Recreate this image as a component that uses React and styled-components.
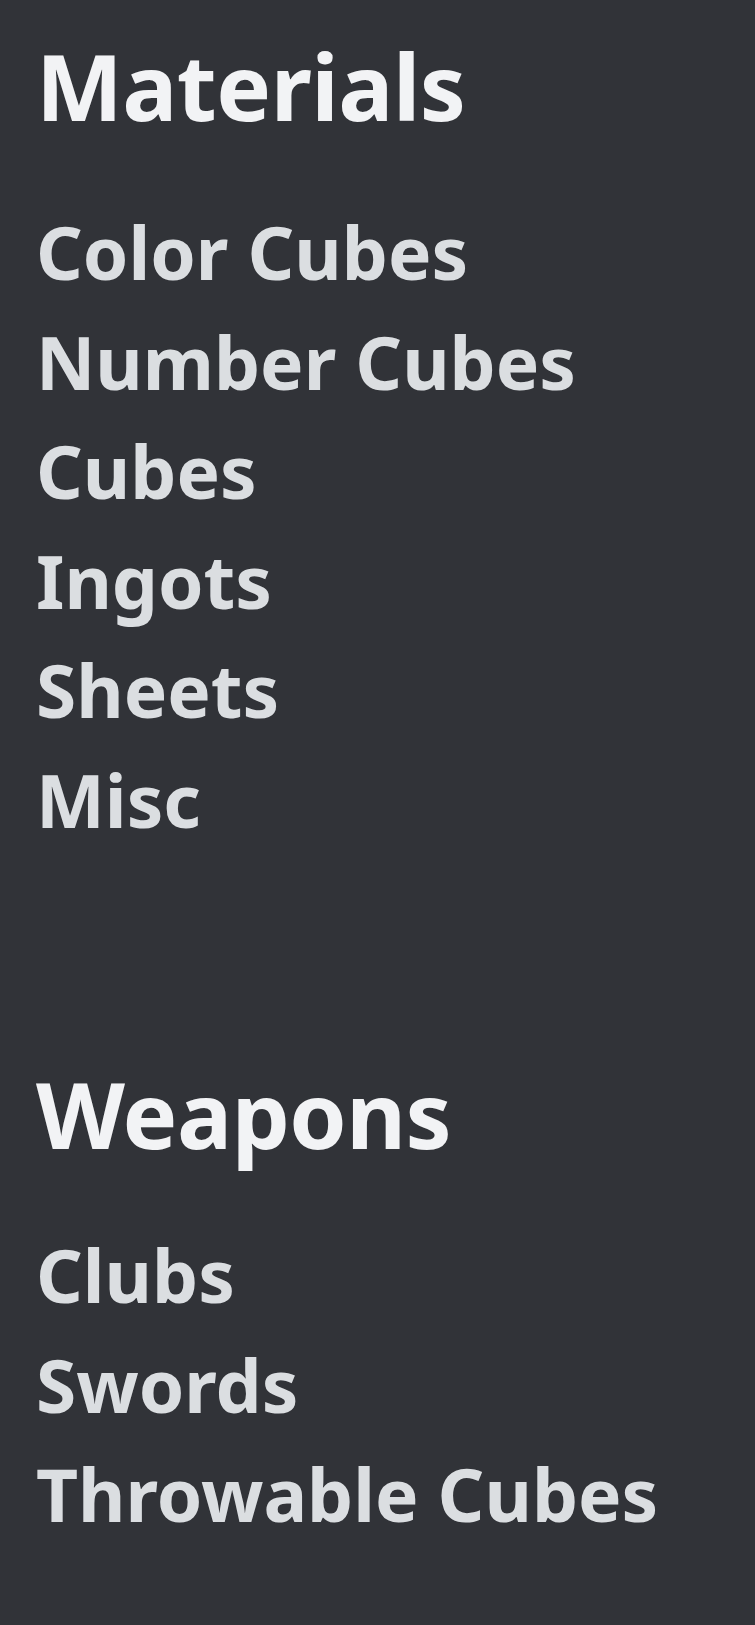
import React from "react";
import styled, { createGlobalStyle } from "styled-components";

const GlobalStyle = createGlobalStyle`
  html, body {
    margin: 0;
    padding: 0;
    background: #313338;
  }
  body {
    font-family: "Noto Sans", "Liberation Sans", sans-serif;
  }
`;

const Page = styled.main`
  min-height: 1625px;
  box-sizing: border-box;
  background: #313338;
  padding: 31px 36px 0 36px;
  display: flex;
  flex-direction: column;
  gap: 205px;
`;

const Section = styled.section`
  display: flex;
  flex-direction: column;
`;

const Heading = styled.h1`
  margin: 0 0 ${(p) => p.$gap}px 0;
  font-size: 92px;
  line-height: 110px;
  font-weight: 700;
  color: #f2f3f5;
  letter-spacing: -0.5px;
`;

const ItemList = styled.ul`
  list-style: none;
  margin: 0;
  padding: 0;
`;

const Item = styled.li`
  font-size: 73px;
  line-height: 109.5px;
  font-weight: 700;
  color: #dbdee1;
  white-space: nowrap;
`;

const sections = [
  {
    title: "Materials",
    gap: 56,
    items: ["Color Cubes", "Number Cubes", "Cubes", "Ingots", "Sheets", "Misc"],
  },
  {
    title: "Weapons",
    gap: 51,
    items: ["Clubs", "Swords", "Throwable Cubes"],
  },
];

export default function App() {
  return (
    <>
      <GlobalStyle />
      <Page>
        {sections.map((s) => (
          <Section key={s.title}>
            <Heading $gap={s.gap}>{s.title}</Heading>
            <ItemList>
              {s.items.map((it) => (
                <Item key={it}>{it}</Item>
              ))}
            </ItemList>
          </Section>
        ))}
      </Page>
    </>
  );
}
